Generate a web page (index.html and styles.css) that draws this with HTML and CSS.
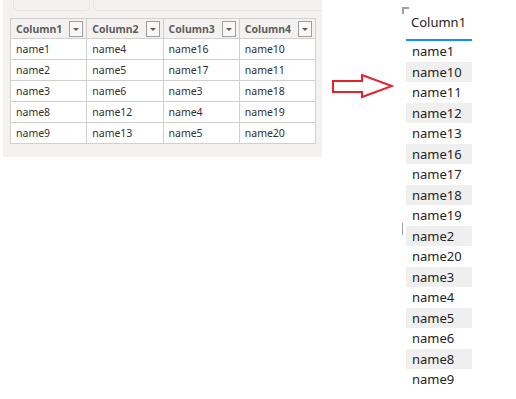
FILE: index.html
```html
<!DOCTYPE html>
<html>
<head>
<meta charset="utf-8">
<link rel="stylesheet" href="styles.css">
</head>
<body>
<div class="page">
  <section class="visual">
    <div class="toolbar"><span class="pill pill-a"></span><span class="pill pill-b"></span></div>
    <table class="grid">
      <colgroup><col><col><col><col></colgroup>
      <thead>
        <tr>
          <th><div class="hd"><span>Column1</span><span class="dd"></span></div></th>
          <th><div class="hd"><span>Column2</span><span class="dd"></span></div></th>
          <th><div class="hd"><span>Column3</span><span class="dd"></span></div></th>
          <th><div class="hd"><span>Column4</span><span class="dd"></span></div></th>
        </tr>
      </thead>
      <tbody>
        <tr><td>name1</td><td>name4</td><td>name16</td><td>name10</td></tr>
        <tr><td>name2</td><td>name5</td><td>name17</td><td>name11</td></tr>
        <tr><td>name3</td><td>name6</td><td>name3</td><td>name18</td></tr>
        <tr><td>name8</td><td>name12</td><td>name4</td><td>name19</td></tr>
        <tr><td>name9</td><td>name13</td><td>name5</td><td>name20</td></tr>
      </tbody>
    </table>
  </section>

  <svg class="arrow" width="62" height="26" viewBox="0 0 62 26">
    <polygon points="1,7 30,7 30,1 60,12 30,23 30,18 1,18" fill="none" stroke="#e8202a" stroke-width="2" stroke-linejoin="miter"/>
  </svg>

  <section class="slicer">
    <span class="corner"></span>
    <span class="handle"></span>
    <div class="slicer-head">Column1</div>
    <ul class="items">
      <li>name1</li>
      <li>name10</li>
      <li>name11</li>
      <li>name12</li>
      <li>name13</li>
      <li>name16</li>
      <li>name17</li>
      <li>name18</li>
      <li>name19</li>
      <li>name2</li>
      <li>name20</li>
      <li>name3</li>
      <li>name4</li>
      <li>name5</li>
      <li>name6</li>
      <li>name8</li>
      <li>name9</li>
    </ul>
  </section>
</div>
</body>
</html>
```

FILE: styles.css
```css
html, body {
  margin: 0;
  padding: 0;
  background: #ffffff;
}

.page {
  display: flex;
  align-items: flex-start;
  width: 516px;
  height: 399px;
  overflow: hidden;
  font-family: "Noto Sans", "Open Sans", sans-serif;
}

.visual {
  margin-left: 3px;
  width: 319px;
  height: 157px;
  background: #f3f2f1;
  box-sizing: border-box;
  flex: none;
}

.toolbar {
  display: flex;
  gap: 3px;
  height: 12px;
  padding-left: 10px;
  overflow: hidden;
}

.pill {
  display: block;
  height: 20px;
  margin-top: -9px;
  border: 1px solid #e6e4e2;
  border-radius: 5px;
  box-sizing: border-box;
}

.pill-a { width: 77px; }
.pill-b { flex: 1; border-right: none; border-radius: 5px 0 0 5px; }

.grid {
  margin: 6px 0 0 7px;
  border-collapse: collapse;
  table-layout: fixed;
  width: 306px;
  background: #ffffff;
}

.grid col { width: 76px; }

.grid th,
.grid td {
  border: 1px solid #d2d0ce;
  height: 20px;
  padding: 0 0 0 5px;
  box-sizing: border-box;
  text-align: left;
  white-space: nowrap;
}

.grid th {
  background: #f3f2f1;
  color: #605e5c;
  font-size: 10.5px;
  font-weight: 700;
  padding-right: 3px;
}

.grid td {
  color: #323130;
  font-size: 10.5px;
  line-height: 20px;
}

.hd {
  display: flex;
  align-items: center;
  justify-content: space-between;
}

.dd {
  position: relative;
  width: 14px;
  height: 16px;
  border: 1px solid #a19f9d;
  box-sizing: border-box;
  background: #f8f8f8;
}

.dd::after {
  content: "";
  position: absolute;
  left: 3px;
  top: 6px;
  border-left: 3px solid transparent;
  border-right: 3px solid transparent;
  border-top: 3px solid #605e5c;
}

.arrow {
  display: block;
  flex: none;
  margin: 74px 0 0 10px;
}

.slicer {
  position: relative;
  margin-left: 8px;
  padding: 0 0 0 4px;
  width: 66px;
  flex: none;
}

.corner {
  position: absolute;
  left: 0;
  top: 7px;
  width: 5px;
  height: 5px;
  border-left: 2px solid #a0a0a0;
  border-top: 2px solid #a0a0a0;
}

.handle {
  position: absolute;
  left: 0;
  top: 223px;
  width: 1px;
  height: 12px;
  background: #a0a0a0;
}

.slicer-head {
  height: 41px;
  box-sizing: border-box;
  padding: 13px 0 0 5px;
  font-size: 13px;
  color: #252423;
  line-height: 19px;
  border-bottom: 2px solid #118dff;
}

.items {
  list-style: none;
  margin: 0;
  padding: 0;
}

.items li {
  height: 20.5px;
  line-height: 20.5px;
  padding-left: 6px;
  font-size: 13px;
  color: #252423;
}

.items li:nth-child(even) {
  background: #efefef;
}
```
